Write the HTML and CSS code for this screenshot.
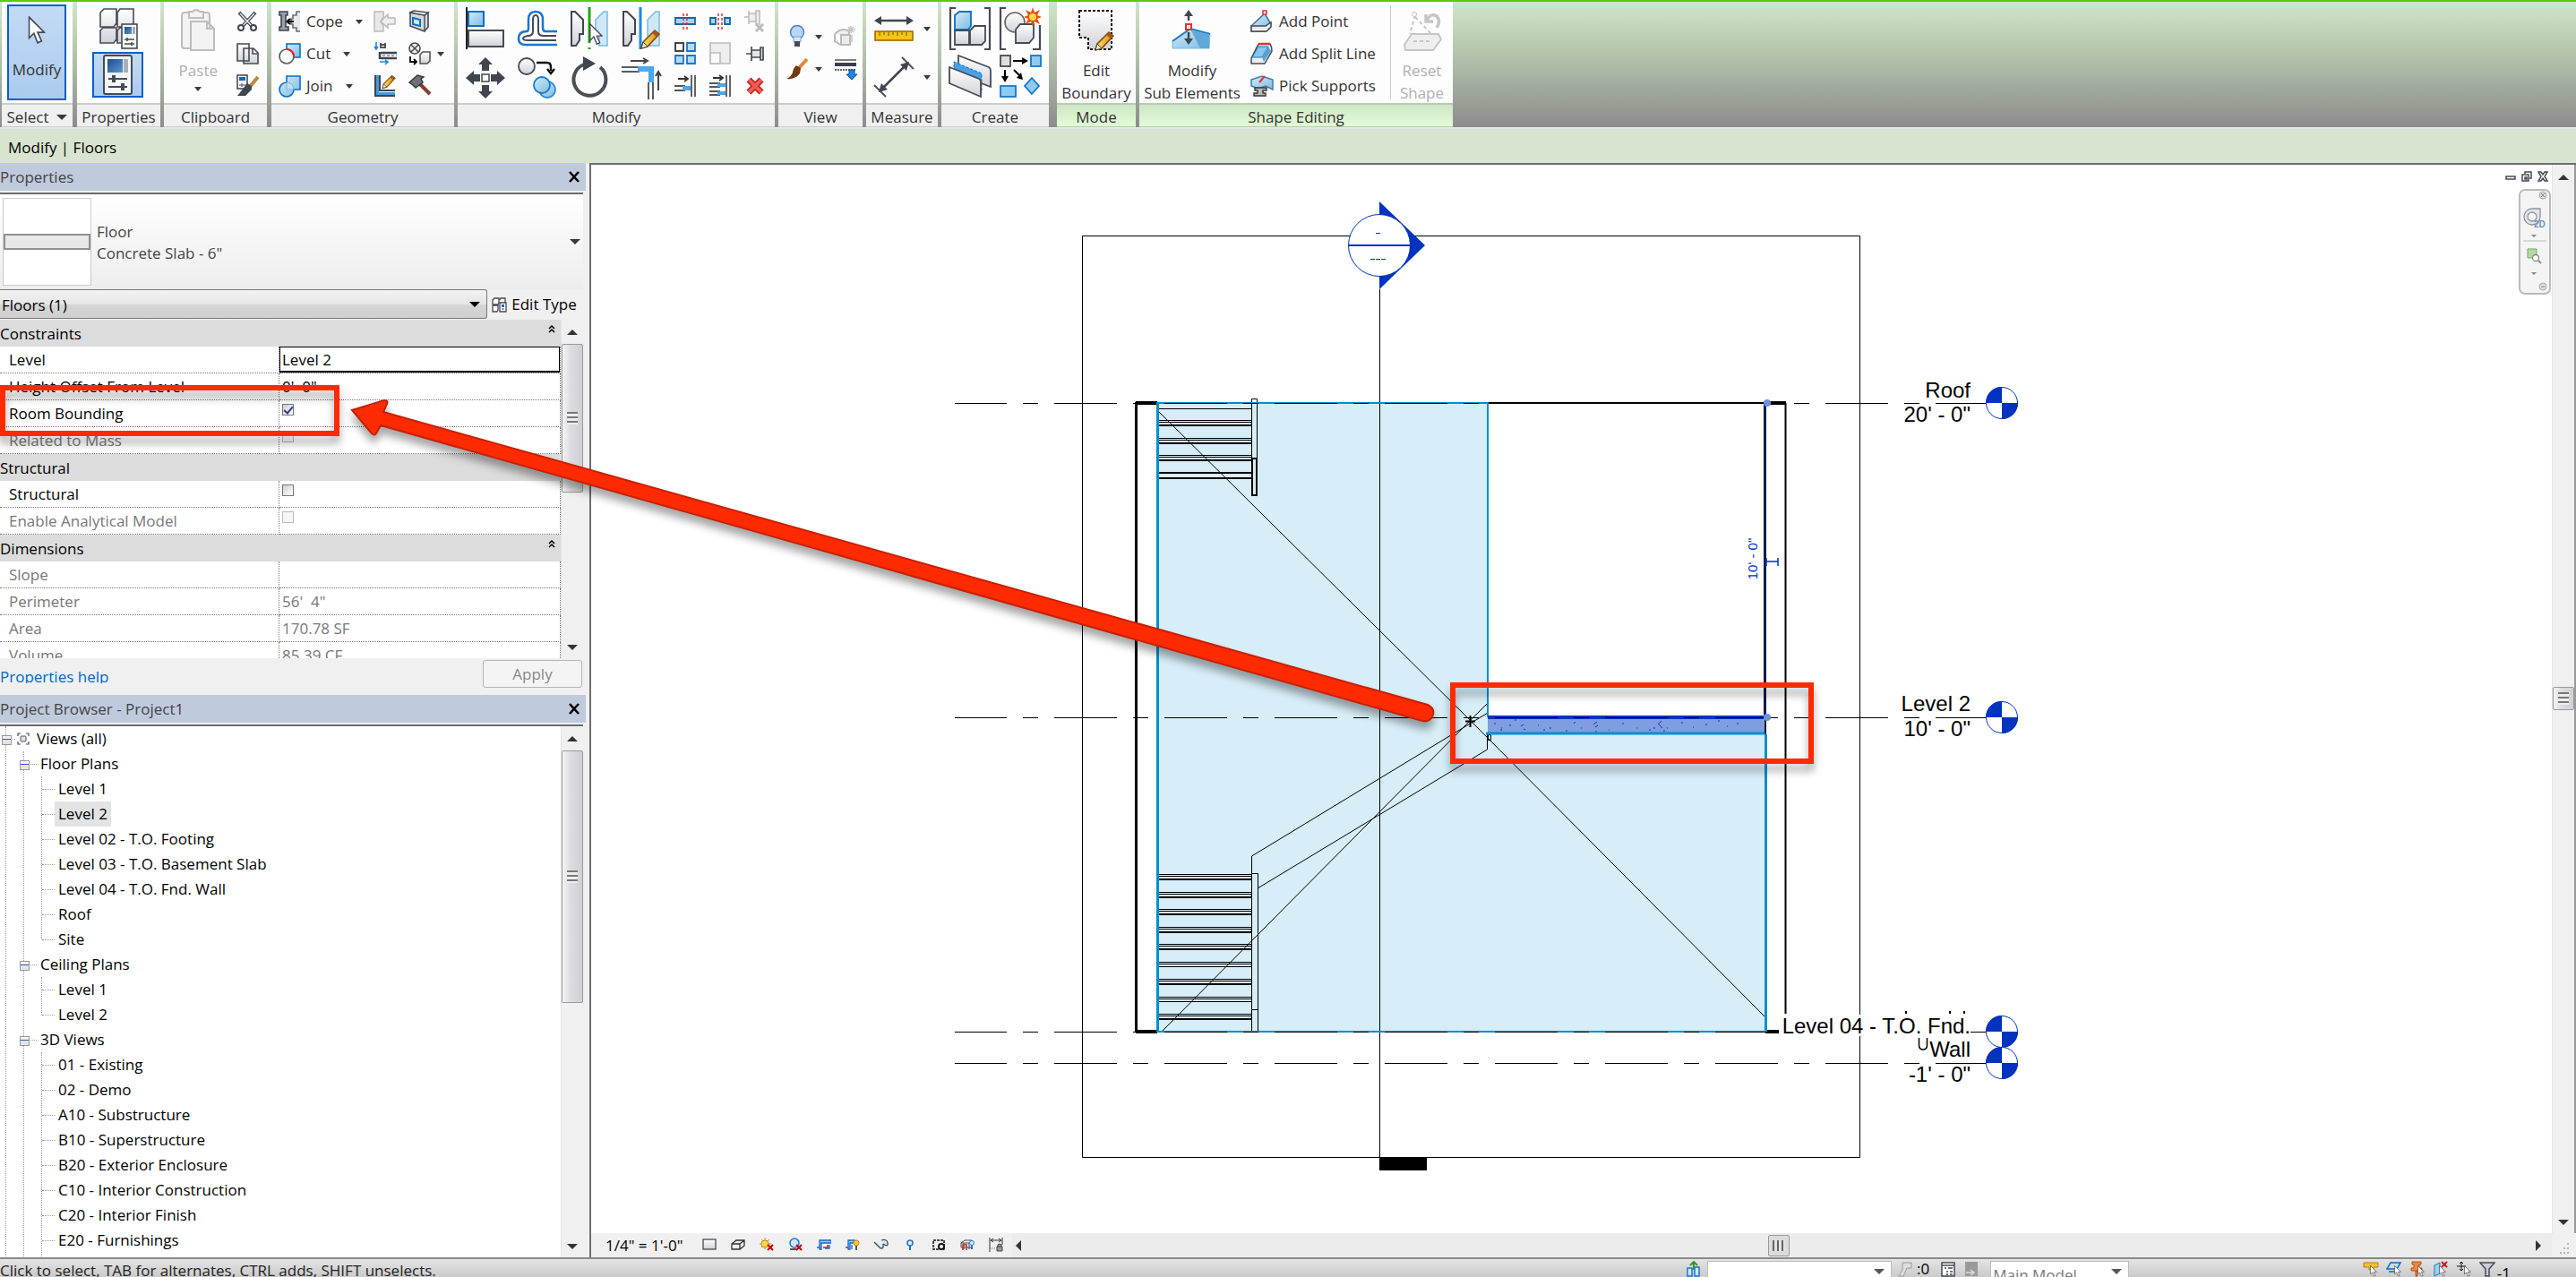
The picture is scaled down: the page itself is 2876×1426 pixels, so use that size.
FILE: index.html
```html
<!DOCTYPE html>
<html lang="en">
<head>
<meta charset="utf-8">
<title>Project1 - Section</title>
<link rel="stylesheet" href="styles.css">
</head>
<body>
<svg class="defs" aria-hidden="true">
  <defs>
    <linearGradient id="steel" x1="0" y1="0" x2="0" y2="1"><stop offset="0" stop-color="#fff"/><stop offset="1" stop-color="#cfd2d8"/></linearGradient>
    <linearGradient id="sky" x1="0" y1="0" x2="1" y2="1"><stop offset="0" stop-color="#d3ebf8"/><stop offset="1" stop-color="#7dbce3"/></linearGradient>
    <linearGradient id="navy" x1="0" y1="0" x2="1" y2="1"><stop offset="0" stop-color="#1d4f8c"/><stop offset="1" stop-color="#5b95cf"/></linearGradient>
    <linearGradient id="gold" x1="0" y1="0" x2="1" y2="0"><stop offset="0" stop-color="#ffe37a"/><stop offset="1" stop-color="#e08a00"/></linearGradient>
    <symbol id="pencil" viewBox="0 0 24 24"><path d="M2 22l2-7L17 2l5 4L9 20z" fill="url(#gold)" stroke="#7a4a10" stroke-width="1.5"/><path d="M17 2l5 4-3 3-5-4z" fill="#a3561d"/><path d="M2 22l2-7 5 5z" fill="#fbe9c0" stroke="#444"/></symbol>
    <symbol id="cursor" viewBox="0 0 18 30"><path d="M1 1v22l5-5 4 10 4-2-4-9h7z" fill="#fff" stroke="#444b55" stroke-width="1.6"/></symbol>
    <symbol id="head" viewBox="-19 -19 38 38"><circle r="17.500" fill="#fff" stroke="#0033c0"/><path d="M0 0V-18A18 18 0 0 0-18 0zM0 0V18A18 18 0 0 0 18 0z" fill="#0033c0"/></symbol>
    <symbol id="cells" viewBox="0 0 44 46"><g fill="url(#steel)" stroke="#454b54" stroke-width="1.6"><path d="M2 5l4-4h14v16l-3 4H2zM21 5l3-4h15v16l-3 4H21zM2 25l3-3h15v13l-3 4H2zM21 25l3-3h15v13l-3 4H21z"/></g><g stroke="#454b54" stroke-width="1.6"><rect x="26" y="18" width="17" height="27" fill="#f6f7f8"/><path d="M29 35h11M29 40h11M32 33v4M37 38v4"/></g><path d="M29 21h8v8h-8z" fill="url(#navy)"/><path d="M38 21h3v8h-3z" fill="#aaa"/></symbol>
  </defs>
</svg>
<div class="app">
  <header class="ribbon">
    <section class="panel p-select">
      <div class="body"><button class="big-btn on"><svg width="20" height="32" viewBox="0 0 18 30"><use href="#cursor"/></svg><span>Modify</span></button></div>
      <h2>Select <i class="caret wide"></i></h2>
    </section>
    <section class="panel p-props">
      <div class="body">
        <button class="ico"><svg width="46" height="46"><use href="#cells"/></svg></button>
        <button class="ico on toggle"><svg width="34" height="46" viewBox="0 0 34 46"><rect x="1" y="1" width="31" height="43" rx="2" fill="#f4f6f9" stroke="#454b54" stroke-width="2"/><rect x="5" y="5" width="17" height="15" fill="url(#navy)"/><rect x="23" y="5" width="5" height="15" fill="#a9b0b8"/><path d="M6 27h21M6 36h21" stroke="#454b54" stroke-width="2"/><path d="M12 23v8M22 32v8" stroke="#454b54" stroke-width="4"/></svg></button>
      </div>
      <h2>Properties</h2>
    </section>
    <section class="panel p-clip">
      <div class="body">
        <button class="tall off"><svg width="40" height="48" viewBox="0 0 40 48"><g fill="#f3f3f3" stroke="#bdbdbd" stroke-width="2"><rect x="2" y="4" width="31" height="40" rx="3"/><path d="M10 3h4q4-4 8 0h4v7H10z"/><path d="M12 14h18l8 8v24H12zM30 14v8h8"/></g></svg><span>Paste</span><i class="caret"></i></button>
        <div class="stack">
          <button class="ico"><svg width="24" height="24" viewBox="0 0 24 24"><path d="M3 2l15 16M21 2L6 18" stroke="#3f4650" stroke-width="4"/><path d="M4 3l14 15M20 3L6 18" stroke="#e6e8ea" stroke-width="1.500"/><g fill="#fff" stroke="#3f4650" stroke-width="2"><circle cx="5" cy="19" r="3"/><circle cx="19" cy="19" r="3"/></g></svg></button>
          <button class="ico"><svg width="26" height="26" viewBox="0 0 26 26"><g fill="url(#steel)" stroke="#454b54" stroke-width="1.600"><path d="M1 2h13v19H1zM8 7h11l5 5v12H8zM18 7v6h6"/></g></svg></button>
          <button class="ico"><svg width="26" height="26" viewBox="0 0 26 26"><rect x="1" y="1" width="11" height="15" fill="#fff" stroke="#454b54" stroke-width="1.600"/><path d="M3 3h7v4H3z" fill="#1565c0"/><path d="M3 12h8M6 10v4" stroke="#454b54"/><path d="M24 3L14 15" stroke="#b98a3c" stroke-width="4"/><path d="M17 13l-5-3-7 9-4 5h9l7-7z" fill="#3f4650"/></svg></button>
        </div>
      </div>
      <h2>Clipboard</h2>
    </section>
    <section class="panel p-geo">
      <div class="body">
        <div class="stack labelled">
          <button class="line"><svg width="26" height="26" viewBox="0 0 26 26"><path d="M1 2h9v4H8v13h3v4H1v-4h2V6H1z" fill="#9aa0a8" stroke="#3f4650" stroke-width="1.600"/><path d="M24 2h-4v4h-4v4h-2v6h2v4h4v4h4" fill="#e8eaed" stroke="#666d76" stroke-width="1.600"/><path d="M17 13H9m0 0l4-3m-4 3l4 3" stroke="#000" stroke-width="1.800" fill="none"/></svg><span>Cope</span><i class="caret"></i></button>
          <button class="line"><svg width="26" height="26" viewBox="0 0 26 26"><rect x="9" y="2" width="15" height="15" fill="url(#sky)" stroke="#0b6fc4" stroke-width="1.600"/><circle cx="9" cy="16" r="8" fill="#fff" stroke="#555c65" stroke-width="1.600"/><path d="M9 8a8 8 0 0 1 8 9" fill="none" stroke="#f11" stroke-width="2"/></svg><span>Cut</span><i class="caret"></i></button>
          <button class="line"><svg width="26" height="26" viewBox="0 0 26 26"><path d="M9 2h15v15h-7a8 8 0 1 1-8-8z" fill="url(#sky)" stroke="#0b6fc4" stroke-width="1.600"/><path d="M9 9a8 8 0 0 1 8 8H9z" fill="#bfe0f3" stroke="#7db4da"/></svg><span>Join</span><i class="caret"></i></button>
        </div>
        <div class="stack">
          <button class="ico"><svg width="26" height="26" viewBox="0 0 26 26"><path d="M1 2h10v6l-3 5 3 5v6H1z" fill="#e8e8e8" stroke="#bbb" stroke-width="1.500"/><path d="M24 9h-8V5l-8 8 8 7v-4h8z" fill="#eee" stroke="#bbb" stroke-width="1.500"/></svg></button>
          <button class="ico"><svg width="26" height="26" viewBox="0 0 26 26"><path d="M3 0v7M1 5l2 3 2-3M7 22h9M13 20l3 2-3 3" stroke="#1e88e5" stroke-width="1.600" fill="none"/><path d="M8 1v5h5V1M8 3h5" stroke="#555" fill="none" stroke-width="2"/><path d="M8 12h18M8 18h18M7 11v8" stroke="#3f4650" stroke-width="2.500"/><path d="M10 15h16" stroke="#555" stroke-dasharray="3 2"/></svg></button>
          <button class="ico"><svg width="26" height="26" viewBox="0 0 26 26"><path d="M2 1v23h22M7 1v17h17" stroke="#3f4650" stroke-width="2" fill="none"/><path d="M4.500 1v20.500H24" stroke="#3d9be8" stroke-width="3" fill="none"/><use href="#pencil" x="8" y="0" width="18" height="17"/></svg></button>
        </div>
        <div class="stack wide-stack">
          <button class="ico"><svg width="26" height="26" viewBox="0 0 26 26"><path d="M2 3l16 3 4-3v16l-4 5L2 18z" fill="#d6d9de" stroke="#454b54" stroke-width="1.600"/><path d="M2 3l4-2 16 2-4 3zM18 6v18" fill="#fff" stroke="#454b54" stroke-width="1.400"/><path d="M5 9l8 2v7l-8-2z" fill="#cde6f7" stroke="#0b6fc4" stroke-width="2"/></svg></button>
          <button class="line"><svg width="26" height="26" viewBox="0 0 26 26"><circle cx="7" cy="7" r="6" fill="#eee" stroke="#454b54" stroke-width="1.600"/><path d="M3 3l8 8M11 3l-8 8" stroke="#454b54" stroke-width="1.500"/><path d="M2 16v6h6M6 19l3 3-3 3" fill="none" stroke="#000" stroke-width="1.800"/><path d="M13 14l3-3h8v10l-3 3h-8z" fill="url(#steel)" stroke="#555" stroke-width="1.600"/></svg><i class="caret"></i></button>
          <button class="ico"><svg width="26" height="26" viewBox="0 0 26 26"><path d="M11 9l13 13" stroke="#8a3a2c" stroke-width="4"/><path d="M1 9l9-8 7 2-3 2 2 4-8 6-3-3z" fill="#6b727b" stroke="#343a42" stroke-width="1.500"/></svg></button>
        </div>
      </div>
      <h2>Geometry</h2>
    </section>
    <section class="panel p-modify">
      <div class="body">
        <div class="big-grid">
          <button class="ico"><svg width="46" height="48" viewBox="0 0 46 48"><path d="M2 0v47" stroke="#222" stroke-width="2"/><rect x="4" y="5" width="17" height="16" fill="url(#sky)" stroke="#0b6fc4" stroke-width="2"/><rect x="4" y="26" width="39" height="18" fill="url(#steel)" stroke="#454b54" stroke-width="2"/></svg></button>
          <button class="ico"><svg width="46" height="46" viewBox="0 0 46 46"><path d="M45 41H10q-8 0-8-7 0-8 9-8 2 0 2-4v-9q0-9 8-9t8 9v9q0 4 3 4h13" fill="none" stroke="#1976d2" stroke-width="2.500"/><path d="M44 36H12q-5 0-5-2t5-3q6 0 6-5V13q0-5 3-5t3 5v13q0 5 6 5h14" fill="none" stroke="#454b54" stroke-width="2"/></svg></button>
          <button class="ico"><svg width="46" height="48" viewBox="0 0 46 48"><path d="M3 5h4l9 9v16h-4v7l-4 6H3z" fill="url(#steel)" stroke="#3f4650" stroke-width="2"/><path d="M43 5h-4l-9 9v16h4v13h9z" fill="#cfe8f6" stroke="#7db9e0" stroke-width="1.500"/><path d="M23 0v47" stroke="#27a416" stroke-width="3" stroke-dasharray="40 5"/><use href="#cursor" x="23" y="18" width="15" height="25"/></svg></button>
          <button class="ico"><svg width="46" height="48" viewBox="0 0 46 48"><path d="M3 5h4l9 9v16h-4v7l-4 6H3z" fill="url(#steel)" stroke="#3f4650" stroke-width="2"/><path d="M43 5h-4l-9 9v29h13z" fill="#cfe8f6" stroke="#7db9e0" stroke-width="1.500"/><path d="M22 0v47" stroke="#1e88e5" stroke-width="3"/><use href="#pencil" x="21" y="24" width="24" height="24"/></svg></button>
          <button class="ico"><svg width="46" height="48" viewBox="0 0 46 48"><path d="M23 1l8 8h-4v7h-8V9h-4zM23 47l8-8h-4v-7h-8v7h-4zM1 24l9-8v4h7v8h-7v4zM45 24l-9-8v4h-7v8h7v4z" fill="#3f4650"/><rect x="19" y="20" width="8" height="8" fill="#fff" stroke="#3f4650" stroke-width="1.500"/></svg></button>
          <button class="ico"><svg width="46" height="48" viewBox="0 0 46 48"><circle cx="11" cy="11" r="9" fill="url(#steel)" stroke="#454b54" stroke-width="1.800"/><path d="M22 7h12q4 0 4 5v4M34 14l4 5 4-5" fill="none" stroke="#111" stroke-width="2.400"/><circle cx="34" cy="37" r="9" fill="url(#sky)" stroke="#2c8ad6" stroke-width="1.800"/><circle cx="28" cy="32" r="9" fill="url(#sky)" stroke="#1976d2" stroke-width="1.800"/></svg></button>
          <button class="ico"><svg width="46" height="48" viewBox="0 0 46 48"><path d="M35 12A18 18 0 1 1 17 9" fill="none" stroke="#4a4f57" stroke-width="4"/><path d="M16 0l14 8-14 8z" fill="#3f4650"/></svg></button>
          <button class="ico"><svg width="46" height="48" viewBox="0 0 46 48"><path d="M11 5h18m-4-3l5 3-5 3M42 38V18m-3 4l3-5 3 5" fill="none" stroke="#3f4650" stroke-width="2"/><path d="M1 12h20M1 17h20M31 29v19M36 29v19" stroke="#555c65" stroke-width="2"/><path d="M19 14h15v15" fill="none" stroke="#4aa8f0" stroke-width="6"/></svg></button>
        </div>
        <div class="small-grid">
          <button class="ico"><svg width="26" height="24" viewBox="0 0 26 24"><path d="M2 8h22v7H2z" fill="#a8d3ef" stroke="#1565a8" stroke-width="1.800"/><path d="M11 3v18M15 3v18" stroke="#d33" stroke-width="1.500" stroke-dasharray="3 2"/></svg></button>
          <button class="ico"><svg width="26" height="24" viewBox="0 0 26 24"><path d="M2 8h6v7H2zM18 8h6v7h-6z" fill="#a8d3ef" stroke="#1565a8" stroke-width="1.800"/><path d="M11 3v18M15 3v18" stroke="#d33" stroke-width="1.500" stroke-dasharray="3 2"/></svg></button>
          <button class="ico"><svg width="26" height="26" viewBox="0 0 26 26"><path d="M1 8h5M6 1v15M6 4h8v9H6M14 1h4v15h-4z" fill="#eee" stroke="#bbb" stroke-width="1.500"/><path d="M14 16l8 8M22 16l-8 8" stroke="#bbb" stroke-width="3"/></svg></button>
          <button class="ico"><svg width="26" height="26" viewBox="0 0 26 26"><rect x="2" y="1" width="9" height="9" fill="#fff" stroke="#333" stroke-width="1.800"/><path d="M15 1h9v9h-9zM2 15h9v9H2zM15 15h9v9h-9z" fill="#b5daf2" stroke="#1976c8" stroke-width="1.800"/></svg></button>
          <button class="ico"><svg width="26" height="26" viewBox="0 0 26 26"><path d="M2 1h22v23H2z" fill="#eee" stroke="#bbb" stroke-width="1.600"/><path d="M2 12h11v12H2z" fill="#fafafa" stroke="#bbb" stroke-width="1.600"/></svg></button>
          <button class="ico"><svg width="22" height="22" viewBox="0 0 22 22"><path d="M1 11h6M7 3v16M7 7h10v8H7M17 4h3v14h-3z" fill="#e3e5e8" stroke="#454b54" stroke-width="1.700"/></svg></button>
          <button class="ico"><svg width="26" height="26" viewBox="0 0 26 26"><path d="M5 5h11m-4-3l4 3-4 3" fill="none" stroke="#333" stroke-width="1.800"/><path d="M1 13h12M1 18h12M20 1v24M24 1v24" stroke="#555" stroke-width="1.800"/><path d="M10 15.500h9" stroke="#4aa8f0" stroke-width="5"/></svg></button>
          <button class="ico"><svg width="26" height="26" viewBox="0 0 26 26"><path d="M5 4h11m-4-3l4 3-4 3" fill="none" stroke="#333" stroke-width="1.800"/><path d="M1 10h12M1 14h12M1 19h12M1 23h12M20 1v24M24 1v24" stroke="#555" stroke-width="1.800"/><path d="M10 12h9M10 21h9" stroke="#4aa8f0" stroke-width="4"/></svg></button>
          <button class="ico"><svg width="22" height="22" viewBox="0 0 22 22"><path d="M4 4l14 14M18 4L4 18" stroke="#b71c1c" stroke-width="7"/><path d="M4 4l14 14M18 4L4 18" stroke="#f25a50" stroke-width="4"/></svg></button>
        </div>
      </div>
      <h2>Modify</h2>
    </section>
    <section class="panel p-view">
      <div class="body pair-grid">
        <button class="line"><svg width="26" height="26" viewBox="0 0 26 26"><circle cx="13" cy="8" r="7.500" fill="#b9d6f8" stroke="#4a80c8" stroke-width="1.500"/><path d="M9 13h8v6H9z" fill="#d5e6f8" stroke="#7ba3d4"/><path d="M10 18h6v6h-6z" fill="#444b55"/></svg><i class="caret"></i></button>
        <button class="ico"><svg width="26" height="26" viewBox="0 0 26 26"><path d="M1 10q8-8 16-3v6M1 10v8l6 4" fill="#eee" stroke="#bbb" stroke-width="2"/><rect x="8" y="11" width="10" height="11" fill="#ececec" stroke="#bbb" stroke-width="2"/><path d="M19 1v8M15 5h9M16 2l6 6M22 2l-6 6M20 11v8" stroke="#c5c5c5" stroke-width="1.500"/></svg></button>
        <button class="line"><svg width="26" height="26" viewBox="0 0 26 26"><path d="M24 2L14 13" stroke="#e08a3a" stroke-width="4"/><path d="M17 12l-5-3q-4 4-4 8-2 5-7 7 10 1 15-6z" fill="#6e3a14"/></svg><i class="caret"></i></button>
        <button class="ico"><svg width="26" height="26" viewBox="0 0 26 26"><path d="M1 3h24" stroke="#555" stroke-width="1.500"/><path d="M1 8h24" stroke="#3a3f4a" stroke-width="4"/><path d="M1 14h24" stroke="#333" stroke-width="1.500" stroke-dasharray="2 1"/><path d="M17 14h6v5h3l-6 6-6-6h3z" fill="#1e88e5" stroke="#0b4fa0"/></svg></button>
      </div>
      <h2>View</h2>
    </section>
    <section class="panel p-measure">
      <div class="body col">
        <button class="line"><svg width="46" height="34" viewBox="0 0 46 34"><path d="M4 8h38" stroke="#3f4650" stroke-width="2.500"/><path d="M1 8l8-5v10zM45 8l-8-5v10z" fill="#3f4650"/><rect x="2" y="20" width="42" height="10" fill="#f5c518" stroke="#a36a00" stroke-width="1.600"/><path d="M7 21v4M12 21v3M17 21v4M22 21v3M27 21v4M32 21v3M37 21v4" stroke="#7a5200"/></svg><i class="caret"></i></button>
        <button class="line"><svg width="46" height="46" viewBox="0 0 46 46"><path d="M32 1l13 13M1 32l13 13" stroke="#555" stroke-width="2"/><path d="M9 37L37 9" stroke="#3f4650" stroke-width="2.500"/><path d="M40 6l-3 10-7-7zM6 40l3-10 7 7z" fill="#3f4650"/></svg><i class="caret"></i></button>
      </div>
      <h2>Measure</h2>
    </section>
    <section class="panel p-create">
      <div class="body quad">
        <button class="ico"><svg width="48" height="48" viewBox="0 0 48 48"><path d="M8 1H2v46h6M40 1h6v46h-6" fill="none" stroke="#454b54" stroke-width="2.200"/><path d="M7 9l5-4h13v16l-3 4H7z" fill="url(#sky)" stroke="#0b6fc4" stroke-width="1.800"/><path d="M7 26h16v16H7zM24 26l5-5h12v17l-4 4H24z" fill="url(#steel)" stroke="#454b54" stroke-width="1.800"/></svg></button>
        <button class="ico"><svg width="48" height="48" viewBox="0 0 48 48"><path d="M8 1H2v46h6M38 47h8V20" fill="none" stroke="#454b54" stroke-width="2.200"/><circle cx="18" cy="17" r="11" fill="url(#steel)" stroke="#666" stroke-width="1.600"/><path d="M19 25l5-6h15v15l-5 6H19z" fill="url(#steel)" stroke="#454b54" stroke-width="1.800"/><path d="M38 0l2 6 6-3-3 6 5 2-5 2 3 6-6-3-2 6-2-6-6 3 3-6-5-2 5-2-3-6 6 3z" fill="#f04a10"/><circle cx="38" cy="11" r="4" fill="#ffd94a"/></svg></button>
        <button class="ico"><svg width="50" height="50" viewBox="0 0 50 50"><path d="M12 2l34 13q2 1 2 4v18l-36-14z" fill="url(#steel)" stroke="#454b54" stroke-width="1.800"/><path d="M7 9l31 13v22L7 31z" fill="#4aa0e6" stroke="#0b6fc4" stroke-dasharray="3 2"/><path d="M2 15l33 13q2 1 2 3v17L2 33z" fill="url(#steel)" stroke="#454b54" stroke-width="1.800"/></svg></button>
        <button class="ico"><svg width="48" height="50" viewBox="0 0 48 50"><rect x="2" y="2" width="11" height="12" fill="#ddd" stroke="#454b54" stroke-width="1.800"/><rect x="36" y="2" width="11" height="12" fill="#8fcbf0" stroke="#1976c8" stroke-width="1.800"/><rect x="2" y="36" width="17" height="12" fill="#8fcbf0" stroke="#1976c8" stroke-width="1.800"/><path d="M37 27l8 9-8 9-8-9z" fill="#8fcbf0" stroke="#1976c8" stroke-width="1.800"/><path d="M16 8h12M7 18v9M17 18l7 7" stroke="#000" stroke-width="2"/><path d="M26 4l7 4-7 4zM3 25h8l-4 7zM27 29l-7-2 5-6z"/></svg></button>
      </div>
      <h2>Create</h2>
    </section>
    <section class="panel p-mode ctx">
      <div class="body"><button class="tall"><svg width="42" height="48" viewBox="0 0 42 48"><path d="M2 2h36v43H12V32H2z" fill="url(#steel)" stroke="#111" stroke-width="2" stroke-dasharray="3 2"/><use href="#pencil" x="18" y="24" width="24" height="24"/></svg><span>Edit<br>Boundary</span></button></div>
      <h2>Mode</h2>
    </section>
    <section class="panel p-shape ctx">
      <div class="body">
        <button class="tall"><svg width="46" height="48" viewBox="0 0 46 48"><path d="M1 36l20-14 22 6-1 16H1z" fill="url(#sky)" stroke="#7db9e0"/><path d="M1 36l20-14 22 6" fill="none" stroke="#1976d2" stroke-width="2"/><path d="M22 24l10 20h10V28z" fill="#62a8d6"/><path d="M19 13V6m0 20v10" stroke="#3f4650" stroke-width="2.500"/><path d="M14 8l5-7 5 7zM14 33l5 7 5-7z" fill="#3f4650"/><rect x="16" y="17" width="6" height="6" fill="#fff" stroke="#d33" stroke-width="2"/></svg><span>Modify<br>Sub Elements</span></button>
        <div class="stack labelled">
          <button class="line"><svg width="26" height="26" viewBox="0 0 26 26"><path d="M1 18L16 4l7 12-1 4-5 4H1z" fill="url(#sky)" stroke="#3f6f9c" stroke-width="1.500"/><path d="M1 18h16l6-4v5l-5 5H1z" fill="#eee" stroke="#454b54" stroke-width="1.500"/><rect x="14" y="1" width="4" height="4" fill="#fff" stroke="#d33" stroke-width="1.500"/></svg><span>Add Point</span></button>
          <button class="line"><svg width="26" height="26" viewBox="0 0 26 26"><path d="M1 18L8 4q1-2 3-2h11q2 3 2 8l-8 14H1z" fill="#eceef0" stroke="#454b54" stroke-width="1.500"/><path d="M2 17L9 5h11l-7 12z" fill="#8cc4ea" stroke="#1976d2"/><path d="M20 5l3 5-8 12-2-5z" fill="#5aa0d4"/><path d="M9 2h13" stroke="#d33" stroke-width="2.500"/></svg><span>Add Split Line</span></button>
          <button class="line"><svg width="26" height="26" viewBox="0 0 26 26"><path d="M1 6l12-4 12 4v11l-8-4-8 3-8-3z" fill="url(#sky)" stroke="#3f7fb0" stroke-width="1.500"/><path d="M10 9l6-7" stroke="#d33" stroke-width="2"/><path d="M5 15h13v3h-4v3h3v3H4v-3h4v-3H5z" fill="#bbb" stroke="#333" stroke-width="1.400"/></svg><span>Pick Supports</span></button>
        </div>
        <button class="tall off reset"><svg width="44" height="46" viewBox="0 0 44 46"><path d="M10 26h30l3 6-9 12H3l-1-6z" fill="#eee" stroke="#c6c6c6" stroke-width="2"/><path d="M14 5L8 26M14 7l18 19M12 34h20" stroke="#c6c6c6" stroke-width="2" stroke-dasharray="4 3"/><circle cx="13" cy="4" r="2.500" fill="#fff" stroke="#c6c6c6"/><path d="M26 4v8h8M27 11q4-9 11-5 5 5 0 13" fill="none" stroke="#c6c6c6" stroke-width="3.500"/></svg><span>Reset<br>Shape</span></button>
      </div>
      <h2>Shape Editing</h2>
    </section>
  </header>
  <div class="options">Modify | Floors</div>

  <main class="work">
    <aside class="dock">
      <section class="palette props">
        <header class="title"><h3>Properties</h3><button class="close" aria-label="Close Properties"><svg width="14" height="13" viewBox="0 0 14 13"><path d="M2 1l10 11M12 1L2 12" stroke="#000" stroke-width="2.600"/></svg></button></header>
        <button class="type"><span class="thumb"><i></i></span><span class="type-name">Floor<br>Concrete Slab - 6"</span><i class="caret wide"></i></button>
        <div class="filter">
          <label class="combo"><select aria-label="Element filter"><option>Floors (1)</option></select><i class="caret wide"></i></label>
          <button class="edit-type"><svg width="17" height="17" viewBox="0 0 17 17"><path d="M1 3l2-2h5v5L7 8H1zM9 3l1-2h5v5M1 10l1-1h5v5l-1 2H1z" fill="#fff" stroke="#454b54" stroke-width="1.300"/><path d="M9 6h7v10H9z" fill="#fff" stroke="#454b54" stroke-width="1.300"/><path d="M11 8h3v3h-3z" fill="#1565c0"/><path d="M11 13h3" stroke="#454b54"/></svg>Edit Type</button>
        </div>
        <div class="scroll-row">
          <div class="table-clip">
            <table>
              <colgroup><col class="c-name"><col></colgroup>
              <tr class="grp"><th colspan="2">Constraints<svg class="chev" width="8" height="9" viewBox="0 0 8 9"><path d="M1 4l3-3 3 3M1 8l3-3 3 3" fill="none" stroke="#000" stroke-width="1.500"/></svg></th></tr>
              <tr><td><label for="f-level">Level</label></td><td class="edit"><input id="f-level" type="text" value="Level 2"></td></tr>
              <tr><td>Height Offset From Level</td><td>0'&nbsp; 0"</td></tr>
              <tr><td><label for="f-room">Room Bounding</label></td><td><input id="f-room" type="checkbox" checked></td></tr>
              <tr class="dim"><td><label for="f-mass">Related to Mass</label></td><td><input id="f-mass" type="checkbox" disabled></td></tr>
              <tr class="grp"><th colspan="2">Structural<svg class="chev" width="8" height="9" viewBox="0 0 8 9"><path d="M1 4l3-3 3 3M1 8l3-3 3 3" fill="none" stroke="#000" stroke-width="1.500"/></svg></th></tr>
              <tr><td><label for="f-struct">Structural</label></td><td><input id="f-struct" type="checkbox"></td></tr>
              <tr class="dim"><td><label for="f-anal">Enable Analytical Model</label></td><td><input id="f-anal" type="checkbox" disabled></td></tr>
              <tr class="grp"><th colspan="2">Dimensions<svg class="chev" width="8" height="9" viewBox="0 0 8 9"><path d="M1 4l3-3 3 3M1 8l3-3 3 3" fill="none" stroke="#000" stroke-width="1.500"/></svg></th></tr>
              <tr class="dim"><td>Slope</td><td></td></tr>
              <tr class="dim"><td>Perimeter</td><td>56'&nbsp; 4"</td></tr>
              <tr class="dim"><td>Area</td><td>170.78 SF</td></tr>
              <tr class="dim"><td>Volume</td><td>85.39 CF</td></tr>
            </table>
          </div>
          <div class="vbar"><i class="tri up"></i><div class="grip g-props"><b></b></div><i class="tri down"></i></div>
        </div>
        <footer><a href="#help">Properties help</a><button class="apply" disabled>Apply</button></footer>
      </section>
      <section class="palette browser">
        <header class="title"><h3>Project Browser - Project1</h3><button class="close" aria-label="Close Project Browser"><svg width="14" height="13" viewBox="0 0 14 13"><path d="M2 1l10 11M12 1L2 12" stroke="#000" stroke-width="2.600"/></svg></button></header>
        <div class="scroll-row">
          <div class="tree">
            <ul class="root"><li class="has"><span class="node"><svg width="14" height="14" viewBox="0 0 14 14"><path d="M4 1H1v3M10 1h3v3M1 10v3h3M13 10v3h-3" fill="none" stroke="#454b54" stroke-width="1.200"/><rect x="4" y="4" width="6" height="6" rx="1" fill="#dde" stroke="#555"/></svg>Views (all)</span>
              <ul>
                <li class="has"><span class="node">Floor Plans</span>
                  <ul class="shut"><li><span class="node">Level 1</span></li><li><span class="node"><mark>Level 2</mark></span></li><li><span class="node">Level 02 - T.O. Footing</span></li><li><span class="node">Level 03 - T.O. Basement Slab</span></li><li><span class="node">Level 04 - T.O. Fnd. Wall</span></li><li><span class="node">Roof</span></li><li><span class="node">Site</span></li></ul></li>
                <li class="has"><span class="node">Ceiling Plans</span>
                  <ul class="shut"><li><span class="node">Level 1</span></li><li><span class="node">Level 2</span></li></ul></li>
                <li class="has"><span class="node">3D Views</span>
                  <ul><li><span class="node">01 - Existing</span></li><li><span class="node">02 - Demo</span></li><li><span class="node">A10 - Substructure</span></li><li><span class="node">B10 - Superstructure</span></li><li><span class="node">B20 - Exterior Enclosure</span></li><li><span class="node">C10 - Interior Construction</span></li><li><span class="node">C20 - Interior Finish</span></li><li><span class="node">E20 - Furnishings</span></li><li><span class="node"></span></li></ul></li>
              </ul></li></ul>
          </div>
          <div class="vbar"><i class="tri up"></i><div class="grip g-tree"><b></b></div><i class="tri down"></i></div>
        </div>
      </section>
    </aside>

    <section class="view">
      <div class="sheet">
        <svg class="drawing" viewBox="660 185 2189 1191" preserveAspectRatio="xMidYMid meet">
          <path class="room" d="M1292 450H1661V820H1971V1152H1292z"/>
          <g class="hair">
            <path d="M1208.500 263.500H2076.500V1292.500H1208.500z"/>
            <path d="M1540.500 323V1292"/>
            <path d="M1292 458L1640 803L1971 1136M1297 1152L1641 805L1661 785"/>
            <path d="M1397.500 1152V956L1661 796M1404.500 1152V975.500H1397M1404 992L1660.500 837V820M1397 1127.500H1404M1397.500 512V445.500H1403.500V512"/>
            <path d="M1661.500 820.500H1664.500V826.500H1661.500z"/>
          </g>
          <path d="M1540 1292h53v15h-53z"/>
          <g class="steps">
            <path class="t1" d="M1293 456.500h104M1293 469.500h104M1293 471.500h104M1293 489.500h104M1293 491.500h104M1293 508.500h104M1293 510.500h104M1293 976.500h104M1293 978.500h104M1293 996.500h104M1293 998.500h104M1293 1015.500h104M1293 1017.500h104M1293 1035.500h104M1293 1037.500h104M1293 1054.500h104M1293 1056.500h104M1293 1074.500h104M1293 1076.500h104M1293 1079.500h104M1293 1093.500h104M1293 1095.500h104M1293 1113.500h104M1293 1115.500h104M1293 1118.500h104M1293 1132.500h104M1293 1134.500h104"/>
            <path class="t2" d="M1293 475h104M1293 495h104M1293 514h104M1293 528h104M1293 534h104M1293 982h104M1293 1002h104M1293 1021h104M1293 1041h104M1293 1060h104M1293 1099h104M1293 1138h104M1398 512h5v41h-5z"/>
          </g>
          <g class="wall">
            <path d="M1661 450H1971M1993.500 450V1132"/>
            <path class="outer" d="M1268.500 449V1153"/>
            <path class="cap" d="M1268 450h24M1971 450h23M1268 1152h24M1971 1152h16"/>
            <path class="ink" d="M1970.500 450V820"/>
          </g>
          <path class="edge" d="M1661 801V450H1292V1152H1971"/>
          <path class="edge bold" d="M1292.500 450V1152M1971.500 820V1152"/>
          <path d="M1661 799h310v20h-310z" fill="#7f9de0"/>
          <path class="speck" d="M1668 808h2m6 5h1m8-3h2m4-6h2m5 7l3-2m0 5l2 1m14-5h1m12 3h2m16 3h2m7-8l2-2m6 7h1m13-4l4-3m-2 6l3-2m12 5h1m14-7h2m14 5h1m13 2h2m8-6l4-4m1 8l-4-4m-6 4h2m13 0h1m15-6h2m11 5h1m13-3h2m12-4h2m8 6h1m10-3h2m-160 9h2m-60-2h2m-50 0h2m180 1h2"/>
          <path d="M1661 801h310" stroke="#0033c0" stroke-width="4"/>
          <path d="M1659 819h312" stroke="#0090d0" stroke-width="3"/>
          <path d="M1971 801v18" stroke="#111" stroke-width="2"/>
          <path class="level" d="M1066 450.500H2217M1066 801.500H2217M1066 1152.500H2217M1066 1187.500H2217"/>
          <path d="M1636 805.500h11M1641.500 799v13" stroke="#000" stroke-width="2"/>
          <path d="M1540 225L1591 274L1540 323z" fill="#0033c0"/>
          <circle cx="1540" cy="274" r="34.500" fill="#fff" stroke="#0033c0"/>
          <path d="M1505 274H1576" stroke="#0033c0" stroke-width="2"/>
          <path d="M1536 260.500h5M1530 289.500h5M1536 289.500h5M1542 289.500h5" stroke="#0033c0"/>
          <path d="M1972 623v9M1985 623v9M1972 627h13" stroke="#0033c0" stroke-width="1.500" fill="none"/>
          <circle cx="1973" cy="450" r="4" fill="#6f8fdb"/><circle cx="1973" cy="801" r="4" fill="#6f8fdb"/>
          <path d="M1986 1133h214v24h-214z" fill="#fff"/>
          <path d="M2200 1152.500h17" stroke="#000"/>
          <path d="M2128 1129v3M2177 1129v3M2193 1129v3" stroke="#000" stroke-width="2"/>
          <use href="#head" x="2216" y="431" width="38" height="38"/>
          <use href="#head" x="2216" y="782" width="38" height="38"/>
          <use href="#head" x="2216" y="1133" width="38" height="38"/>
          <use href="#head" x="2216" y="1168" width="38" height="38"/>
          <g class="tags">
            <text x="2200" y="444">Roof</text><text x="2200" y="471">20' - 0"</text>
            <text x="2200" y="794">Level 2</text><text x="2200" y="822">10' - 0"</text>
            <text x="2200" y="1154">Level 04 - T.O. Fnd.</text><text x="2200" y="1180">Wall</text><text x="2200" y="1208">-1' - 0"</text>
          </g>
          <path d="M2142.500 1159v8q0 5 4.500 5t4.500-5v-8" fill="none" stroke="#000" stroke-width="1.500"/>
          <text class="dimtext" transform="translate(1962 624) rotate(-90)">10' - 0"</text>
        </svg>
        <div class="win-ctl"><button aria-label="Minimize"><svg width="12" height="12" viewBox="0 0 12 12"><path d="M1 6h10v3H1z" fill="#fff" stroke="#454b54" stroke-width="1.500"/></svg></button><button aria-label="Restore"><svg width="12" height="12" viewBox="0 0 12 12"><path d="M4 3V1h7v7H9M1 4h7v7H1zM4 7h2v2H4z" fill="none" stroke="#454b54" stroke-width="1.500"/></svg></button><button aria-label="Close view"><svg width="12" height="12" viewBox="0 0 12 12"><path d="M1 1h3l2 3 2-3h3L8 6l3 5H8L6 8l-2 3H1l3-5z" fill="#fff" stroke="#454b54" stroke-width="1.500"/></svg></button></div>
        <nav class="navbar">
          <svg width="36" height="117" viewBox="0 0 36 117"><g fill="#ddd" stroke="#aaa"><circle cx="27" cy="7" r="4"/><circle cx="27" cy="109" r="4"/></g><path d="M25 5l4 4M29 5l-4 4M25 109h4" stroke="#888"/><path d="M6 31a9 9 0 0 1 9-9h9v9a9 9 0 0 1-18 0z" fill="#e3e6ea" stroke="#8d949c" stroke-width="1.300"/><circle cx="15" cy="31" r="5" fill="#f5f5f5" stroke="#8d949c" stroke-width="1.300"/><text x="17" y="43">2D</text><path d="M14 51h6l-3 3zM14 93h6l-3 3z" fill="#888"/><path d="M5 58h26" stroke="#bbb"/><path d="M10 67h10v10H10z" fill="#b7d8a3" stroke="#6fae57"/><circle cx="19" cy="77" r="3.500" fill="#fff" stroke="#888" stroke-width="1.300"/><path d="M22 80l3 3" stroke="#888" stroke-width="2"/></svg>
        </nav>
      </div>
      <div class="vbar canvas-v"><i class="tri up"></i><div class="grip g-sheet"><b></b></div><i class="tri down"></i></div>
      <div class="viewbar">
        <span class="scale">1/4" = 1'-0"</span>
        <div class="tools">
          <button><svg viewBox="0 0 16 16"><rect x="1" y="2" width="14" height="11" fill="url(#steel)" stroke="#454b54" stroke-width="1.300"/></svg></button>
          <button><svg viewBox="0 0 16 16"><path d="M1 7l5-4h9v6l-5 4H1zM1 7h9v6M10 7l5-4" fill="#eee" stroke="#333" stroke-width="1.300"/></svg></button>
          <button><svg viewBox="0 0 16 16"><path d="M6 0v13M0 7h13M2 2l9 9M11 2l-9 9" stroke="#c98a1b"/><circle cx="6" cy="7" r="4" fill="#ffd94a" stroke="#c98a1b"/><path d="M9 8l6 6M15 8l-6 6" stroke="#c00" stroke-width="2"/></svg></button>
          <button><svg viewBox="0 0 16 16"><circle cx="7" cy="6" r="5" fill="#cfe8f8" stroke="#1976c8" stroke-width="1.500"/><path d="M2 13h7" stroke="#555" stroke-width="2"/><path d="M9 8l6 6M15 8l-6 6" stroke="#c00" stroke-width="2"/></svg></button>
          <button><svg viewBox="0 0 16 16"><path d="M5 13V6h11V3H3v10zM0 11h3M9 12h5V8" fill="#9fd0ee" stroke="#1565c0" stroke-width="1.300"/><path d="M7 11h5V8" stroke="#c22" fill="none" stroke-width="1.500"/></svg></button>
          <button><svg viewBox="0 0 16 16"><path d="M5 13V6h5V3H3v10zM0 11h3M7 13V8" fill="#9fd0ee" stroke="#1565c0" stroke-width="1.300"/><circle cx="12" cy="6" r="3" fill="#ffc93c" stroke="#d08200"/><path d="M12 9v5" stroke="#555" stroke-width="2"/></svg></button>
          <button><svg viewBox="0 0 16 16"><path d="M0 5l6 6q2 2 4 0V7M10 7q6 4 5-1T8 3" fill="#d5eaf7" stroke="#454b54" stroke-width="1.300"/></svg></button>
          <button><svg viewBox="0 0 16 16"><circle cx="8" cy="6" r="3" fill="#dff0fb" stroke="#1976c8" stroke-width="1.500"/><path d="M8 9v5" stroke="#1976c8" stroke-width="2"/></svg></button>
          <button><svg viewBox="0 0 16 16"><path d="M2 3h12v10H2z" fill="#eee" stroke="#111" stroke-width="1.500" stroke-dasharray="3 1"/><circle cx="11" cy="10" r="3" fill="#fff" stroke="#111" stroke-width="2"/></svg></button>
          <button><svg viewBox="0 0 16 16"><path d="M1 6l4-3h8v8H1zM1 6h9v7M4 6v7" fill="none" stroke="#454b54"/><path d="M3 14V8h4v6" stroke="#c22" fill="none" stroke-width="1.500"/><circle cx="13" cy="6" r="2.500" fill="#dff0fb" stroke="#1976c8"/><path d="M13 9v4" stroke="#1976c8" stroke-width="2"/></svg></button>
          <button><svg viewBox="0 0 16 16"><path d="M1 0v16M15 0v8M2 3h12M5 1L2 3l3 2M11 1l3 2-3 2" fill="none" stroke="#333"/><path d="M2 12h6" stroke="#777" stroke-dasharray="1 1"/><path d="M9 10h6v5H9zM10 10V8q2-2 4 0v2" fill="#999" stroke="#444"/></svg></button>
        </div>
        <div class="hbar"><i class="tri left"></i><div class="hgrip"></div><i class="tri right"></i></div>
      </div>
      <div class="corner"><svg width="14" height="14" viewBox="0 0 14 14"><path d="M10 1h2v2h-2zM6 6h2v2H6zM10 6h2v2h-2zM2 11h2v2H2zM6 11h2v2H6zM10 11h2v2h-2z" fill="#b5b5b5"/></svg></div>
    </section>
  </main>

  <footer class="status">
    <span class="msg">Click to select, TAB for alternates, CTRL adds, SHIFT unselects.</span>
    <div class="worksets">
      <button><svg width="18" height="18" viewBox="0 0 18 18"><path d="M9 2v8M5 5l4-4 4 4" stroke="#2a9a2a" stroke-width="2" fill="none"/><path d="M2 8h5v9H2zM10 7h5v10h-5z" fill="#cfe8f8" stroke="#1976c8" stroke-width="1.500"/></svg></button>
      <label class="combo flat"><select aria-label="Active workset"><option></option></select><i class="caret wide"></i></label>
      <button class="req"><svg width="18" height="18" viewBox="0 0 18 18"><path d="M6 2h10v6h-5l-4 9H2l4-7z" fill="#ddd" stroke="#999"/></svg><span>:0</span></button>
      <button><svg width="18" height="18" viewBox="0 0 18 18"><path d="M2 2h14v15H2zM2 5h14M5 8h2M9 8h5M7 12h2M11 12h3M7 15h2M11 15h3" fill="#fff" stroke="#454b54" stroke-width="1.500"/></svg></button>
      <button><svg width="18" height="18" viewBox="0 0 18 18"><path d="M2 1h14v16H2z" fill="#9a9a9a"/><path d="M3 13h8M8 10l4 3-4 3" stroke="#ddd" fill="none" stroke-width="1.500"/></svg></button>
      <label class="combo flat model"><select aria-label="Design option"><option>Main Model</option></select><i class="caret wide"></i></label>
    </div>
    <div class="picks">
      <button><svg width="18" height="18" viewBox="0 0 18 18"><path d="M1 2h16v5h-5v3H7V7H1z" fill="#f2c230" stroke="#b98500"/><use href="#cursor" x="8" y="5" width="8" height="13"/></svg></button>
      <button><svg width="18" height="18" viewBox="0 0 18 18"><path d="M5 2h11l-4 7H1zM3 12h7" fill="#bfe0f5" stroke="#1565c0" stroke-width="1.500"/><use href="#cursor" x="9" y="5" width="8" height="13"/></svg></button>
      <button><svg width="18" height="18" viewBox="0 0 18 18"><path d="M3 1h10v3h-2v4h3v3H2V8h3V4H3zM7 11h2v6H7z" fill="#f0883a" stroke="#b4500e"/><use href="#cursor" x="9" y="5" width="8" height="13"/></svg></button>
      <button><svg width="18" height="18" viewBox="0 0 18 18"><path d="M2 5l6-3v12l-6 3z" fill="#9fd0ee" stroke="#1976c8"/><path d="M10 1l6 6M16 1l-6 6" stroke="#d11" stroke-width="2"/><use href="#cursor" x="7" y="5" width="8" height="13"/></svg></button>
      <button><svg width="18" height="18" viewBox="0 0 18 18"><path d="M6 1v10M1 6h10M4 3l2-2 2 2M4 9l2 2 2-2" stroke="#111" fill="none"/><use href="#cursor" x="9" y="5" width="8" height="13"/></svg></button>
      <button><svg width="18" height="18" viewBox="0 0 18 18"><path d="M1 2h16l-6 7v8H7V9z" fill="#c9ced6" stroke="#454b54" stroke-width="1.500"/></svg></button>
      <span>-1</span>
    </div>
  </footer>

  <svg class="markup" viewBox="0 0 2876 1426" preserveAspectRatio="xMinYMin meet" aria-hidden="true">
    <rect x="3" y="433" width="373" height="51"/>
    <rect x="1622" y="765" width="400" height="85"/>
    <path d="M393 458L429 447Q434 447 432 451L428 460L1594 787Q1602 791 1600 798Q1597 807 1588 805L425 475L420 484Q418 487 415 484z"/>
  </svg>
</div>
</body>
</html>
```
FILE: styles.css
```css
* { box-sizing: border-box; }
body { margin: 0; font: 17px/24px "Open Sans", "Noto Sans", sans-serif; color: #000; background: #f0f0f0; overflow: hidden; }
button { font: inherit; color: inherit; background: none; border: 0; padding: 0; margin: 0; display: flex; align-items: center; justify-content: center; }
svg { display: block; flex: none; }
h2, h3, ul { margin: 0; padding: 0; font: inherit; }
.defs { position: absolute; width: 0; height: 0; }
.app { position: relative; height: 100vh; display: flex; flex-direction: column; overflow: hidden; }

.caret { flex: none; width: 0; height: 0; border: 4px solid transparent; border-top: 5px solid #3a3a3a; border-bottom: 0; }
.caret.wide { border-width: 6px 6px 0; }

/* ribbon */
.ribbon { flex: none; display: flex; height: 144px; padding: 0 0 0 2px; border-top: 2px solid #58cc00; border-bottom: 2px solid #e6e6e6; background: linear-gradient(#d0e6c8, #aab8a4 55%, #8c8c8c); }
.panel { flex: none; display: flex; flex-direction: column; margin-right: 5px; background: #fdfdfd; color: #333; }
.body { flex: 1; display: flex; min-height: 0; }
.panel h2 { flex: none; height: 27px; display: flex; align-items: center; justify-content: center; gap: 9px; padding-top: 3px; background: #f0f0f0; border-top: 2px solid #ccc; border-bottom: 1px solid #ccc; }
.ctx h2 { background: linear-gradient(#cfe6c4, #e4fbd8); border-top-color: #b5cfab; border-bottom-color: #b5cfab; }
.p-select { width: 79px; }
.p-props { width: 93px; margin-right: 4px; }
.p-clip { width: 115px; }
.p-geo { width: 204px; margin-right: 4px; }
.p-modify { width: 354px; margin-right: 4px; }
.p-view { width: 94px; margin-right: 4px; }
.p-measure { width: 80px; margin-right: 4px; }
.p-create { width: 120px; margin-right: 9px; }
.p-mode { width: 88px; margin-right: 4px; }
.p-shape { width: 350px; margin-right: 0; }

.on { background: linear-gradient(#c3dbf3, #aacbef); border: 1px solid #0a60c0; outline: 1px solid #0a60c0; outline-offset: -2px; }
.big-btn { flex-direction: column; width: 66px; height: 107px; margin: 3px 6px; gap: 16px; padding-bottom: 10px; }
.p-props .body { flex-direction: column; align-items: center; gap: 3px; padding: 7px 2px 0 0; }
.toggle { width: 57px; height: 51px; }
.tall { flex-direction: column; justify-content: flex-start; width: 88px; padding-top: 8px; gap: 8px; line-height: 25px; text-align: center; }
.tall .caret { margin-top: -2px; }
.off { color: #b0b0b0; }
.stack { display: grid; grid-template-rows: repeat(3, 36px); align-content: start; justify-items: start; padding-top: 4px; width: 39px; }
.line { justify-content: flex-start; gap: 6px; }
.p-clip .tall { width: 78px; }
.p-clip .stack { padding-left: 4px; }
.p-geo .body { padding-left: 8px; }
.p-geo .labelled { width: 106px; }
.p-geo .labelled .line { gap: 5px; }
.labelled .caret { margin-left: 9px; }
.wide-stack { width: 46px; }
.big-grid { display: grid; grid-template: repeat(2, 55px) / repeat(4, 58px); padding: 2px 0 0 2px; align-content: start; }
.small-grid { display: grid; grid-template: repeat(3, 36px) / repeat(3, 39px); padding-top: 4px; align-content: start; }
.pair-grid { display: grid; grid-template: repeat(2, 36px) / 52px 30px; padding: 21px 0 0 8px; align-content: start; }
.pair-grid .line { gap: 7px; }
.col { display: grid; grid-template-rows: 56px 52px; padding: 2px 0 0 8px; }
.col .line { gap: 10px; }
.quad { display: grid; grid-template: 54px 52px / 56px 56px; padding: 3px 0 0 4px; }
.p-shape .tall { width: 118px; }
.p-shape .labelled { width: 162px; padding-left: 6px; }
.p-shape .reset { width: 70px; margin: 4px 0; padding-top: 6px; border-left: 1px solid #ccc; }

.options { flex: none; height: 38px; padding: 9px 9px 5px; background: #d8e4cf; }

/* left dock */
.work { flex: 1; display: flex; min-height: 0; }
.dock { flex: none; width: 658px; padding-right: 4px; display: flex; flex-direction: column; background: #f0f0f0; }
.palette { display: flex; flex-direction: column; }
.props { flex: none; height: 594px; }
.browser { flex: 1; min-height: 0; }
.title { flex: none; display: flex; justify-content: space-between; align-items: center; height: 31px; margin-bottom: 2px; padding-right: 6px; background: #bfcbdd; color: #444; }
.type { flex: none; height: 108px; margin-right: 3px; padding: 5px 3px; justify-content: flex-start; border-top: 2px solid #6b6b6b; background: linear-gradient(#fff, #ededed); color: #444; text-align: left; }
.thumb { display: flex; align-items: center; width: 99px; height: 98px; background: #fff; border: 1px solid #ccc; }
.thumb i { flex: 1; height: 18px; border: 2px solid #909090; background: #e8e8e8; }
.type-name { flex: 1; padding: 2px 0 0 6px; }
.filter { flex: none; display: flex; height: 34px; }
.combo { position: relative; display: flex; align-items: center; width: 544px; height: 33px; border: 1px solid #777; border-left: 0; border-radius: 0 3px 3px 0; background: linear-gradient(#f2f2f2, #e6e6e6 50%, #d6d6d6 51%, #cfcfcf); }
.combo select { appearance: none; flex: 1; height: 100%; padding: 2px 2px 0; border: 0; background: none; font: inherit; color: inherit; }
.combo .caret { position: absolute; right: 7px; border-top-color: #000; }
.edit-type { flex: 1; gap: 5px; padding-right: 5px; }
.scroll-row { flex: 1; display: flex; min-height: 0; margin-right: 3px; }
.table-clip { flex: 1; overflow: hidden; background: #fff; }
table { width: 100%; border-collapse: separate; border-spacing: 0; table-layout: fixed; }
.c-name { width: 312px; }
td, th { height: 30px; padding: 0 3px; font-weight: 400; text-align: left; border-bottom: 1px dotted #777; border-right: 1px dotted #777; line-height: 24px; }
td:first-child { padding-left: 10px; }
th { background: #dcdcdc; padding: 2px 3px 0 0; border: 0; }
.chev { float: right; margin: 2px 3px 0 0; }
.dim { color: #777; }
td.edit { padding: 0; }
.edit input { display: block; width: 100%; height: 29px; padding: 0 2px; border: 1px solid #000; border-bottom-width: 2px; font: inherit; background: #fff; }
input[type="checkbox"] { appearance: none; display: block; width: 13px; height: 13px; margin: 0 0 9px; border: 1px solid #777; background: linear-gradient(135deg, #ccd0d6, #fff); }
input[type="checkbox"]:disabled { border-color: #bbb; background: #f6f6f6; }
input:checked::after { content: ""; display: block; width: 4px; height: 8px; margin: 0 0 0 3px; border: solid #2b3f96; border-width: 0 2px 2px 0; transform: rotate(40deg); }
.props footer { flex: none; height: 41px; display: flex; justify-content: space-between; align-items: flex-start; padding: 2px 4px 0 0; }
.props footer a { height: 26px; overflow: hidden; padding: 7px 0 0; color: #0066cc; text-decoration: none; line-height: 24px; }
.apply { width: 111px; height: 31px; border: 1px solid #b5b5b5; border-radius: 3px; background: #f4f4f4; color: #888; }

/* scroll bars */
.vbar { flex: none; width: 25px; display: flex; flex-direction: column; align-items: center; background: #f0f0f0; border-left: 1px solid #e4e4e4; }
.tri { flex: none; width: 0; height: 0; border: 6px solid transparent; }
.tri.up { border-top: 0; border-bottom-color: #333; margin: 11px 0 10px; }
.tri.down { border-bottom: 0; border-top-color: #333; margin: auto 0 9px; }
.grip { flex: none; width: 24px; display: flex; align-items: center; justify-content: center; border: 1px solid #999; border-radius: 2px; background: linear-gradient(90deg, #f4f4f4, #dcdde0 40%, #cfd0d3); }
.grip b { width: 12px; height: 14px; background: repeating-linear-gradient(#777 0 2px, #eee 2px 5px); }
.g-props { height: 166px; }
.g-tree { height: 282px; }

/* project browser */
.browser .scroll-row { border-top: 2px solid #6b6b6b; background: #fff; }
.tree { flex: 1; overflow: hidden; }
.tree ul { list-style: none; margin-left: 19px; border-left: 1px dotted #999; }
.tree ul.root { margin-left: 6px; }
.tree li { position: relative; }
.node { display: flex; align-items: center; gap: 8px; height: 28px; padding-left: 18px; }
.root > li > .node { padding-left: 12px; }
.tree li::before { content: ""; position: absolute; left: 0; top: 14px; width: 14px; border-top: 1px dotted #999; }
.root > li::before { width: 10px; }
.has::after { content: ""; position: absolute; left: -5px; top: 10px; width: 9px; height: 9px; border: 1px solid #999; background: linear-gradient(#f4f4f4 3px, #3a56b0 3px 4px, #e4e4e4 4px); }
.shut > li:last-child::after { content: ""; position: absolute; left: -1px; top: 15px; width: 1px; height: 13px; background: #fff; }
mark { background: #e3e3e3; color: inherit; height: 28px; line-height: 28px; margin-left: -4px; padding: 0 4px; }

/* drawing view */
.view { flex: 1; display: grid; grid-template: 1fr 27px / 1fr 27px; min-width: 0; border-left: 2px solid #6e6e6e; border-top: 2px solid #6e6e6e; background: #fff; }
.sheet { position: relative; min-width: 0; min-height: 0; }
.drawing { width: 100%; height: 100%; }
.room { fill: #d7edf7; }
.hair path { fill: none; stroke: #000; stroke-width: 1; }
.t1, .t2 { fill: none; stroke: #000; }
.t2 { stroke-width: 2; }
.wall path { fill: none; stroke: #000; stroke-width: 2; }
.wall .outer { stroke-width: 3; }
.wall .cap { stroke-width: 4; }
.wall .ink { stroke: #101a50; stroke-width: 3; }
.edge { fill: none; stroke: #0090c8; stroke-width: 2; }
.edge.bold { stroke-width: 3; }
.speck { fill: none; stroke: #0033c0; stroke-width: 1; }
.level { stroke: #000; stroke-width: 1; stroke-dasharray: 70 18 17 18; stroke-dashoffset: 12; }
.tags text { font: 24px "Liberation Sans", Arial, sans-serif; text-anchor: end; }
.dimtext { font: 15px "Liberation Sans", Arial, sans-serif; text-anchor: middle; fill: #0033c0; }
.win-ctl { position: absolute; right: 4px; top: 7px; display: flex; gap: 6px; }
.navbar { position: absolute; right: 1px; top: 27px; border: 2px solid #bbb; border-radius: 7px; background: #f4f4f4; width: 36px; height: 118px; }
.navbar svg { margin: -2px; }
.navbar text { font: bold 10px "Liberation Sans", Arial, sans-serif; fill: #6b93bd; }
.canvas-v { width: 27px; border-right: 2px solid #999; }
.g-sheet { height: 26px; margin-top: 556px; }
.viewbar { display: flex; align-items: center; background: #f0f0f0; min-width: 0; }
.scale { width: 108px; margin-left: 16px; }
.tools { display: flex; gap: 16px; padding-bottom: 2px; }
.tools svg { width: 16px; height: 16px; }
.hbar { flex: 1; display: flex; align-items: center; height: 100%; margin-left: 10px; background: #ececec; }
.tri.left { border-left: 0; border-right-color: #333; margin-left: 4px; }
.tri.right { border-right: 0; border-left-color: #333; margin: 0 12px 0 auto; }
.hgrip { width: 24px; height: 24px; margin-left: 48.5%; border: 1px solid #999; border-radius: 2px; background: repeating-linear-gradient(90deg, #666 0 2px, #e4e4e4 2px 5px) center / 14px 12px no-repeat, #dcdcdc; }
.corner { display: flex; align-items: flex-end; justify-content: center; padding-bottom: 3px; background: #f0f0f0; }

/* status bar */
.status { flex: none; height: 22px; display: flex; align-items: flex-start; border-top: 2px solid #8a8a8a; background: linear-gradient(#e4e4e4, #cacaca); overflow: hidden; }
.msg { flex: 0 1 1882px; white-space: nowrap; line-height: 26px; color: #222; }
.worksets, .picks { display: flex; align-items: flex-start; height: 20px; padding-top: 2px; }
.combo.flat { width: 206px; height: 30px; margin: 0 4px; border: 1px solid #bbb; border-radius: 0; background: #fff; }
.combo.flat.model { width: 155px; color: #777; }
.flat .caret { top: 8px; border-top-color: #555; }
.worksets { gap: 2px; }
.req { gap: 4px; margin-right: 10px; line-height: 18px; }
.worksets button + button { margin-right: 6px; }
.picks { margin-left: auto; padding-right: 73px; gap: 8px; }
.picks span { margin-left: -6px; line-height: 28px; }

/* review marks */
.markup { position: absolute; left: 0; top: 0; width: 100vw; pointer-events: none; filter: drop-shadow(0 8px 5px rgba(0, 0, 0, .35)); }
.markup rect { fill: none; stroke: #ff2a00; stroke-width: 6; }
.markup path { fill: #ff2a00; stroke: #c82000; stroke-width: 2; }
```
